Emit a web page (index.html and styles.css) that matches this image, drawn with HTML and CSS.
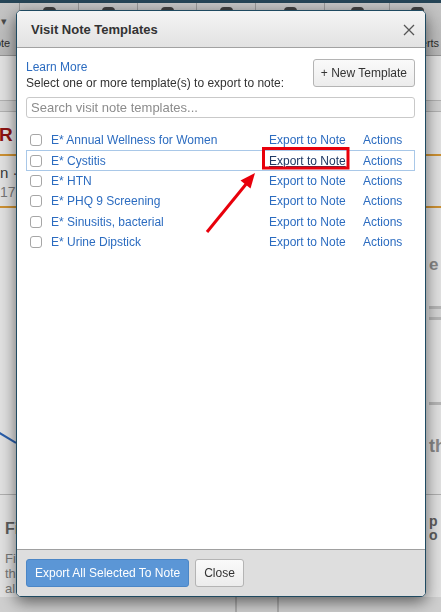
FILE: index.html
```html
<!DOCTYPE html>
<html lang="en">
<head>
  <meta charset="UTF-8" />
  <title>Visit Note Templates</title>
  <link rel="stylesheet" href="styles.css">
</head>
<body>
  <div class="app">
    <div class="topline"></div>
    <div class="toolbar">
      <div class="tool tool-first"><span class="caret">▾</span><span class="tool-label">Note</span></div>
      <div class="tool"><span class="tool-icon"></span><span class="tool-label">Orders</span></div>
      <div class="tool"><span class="tool-icon"></span><span class="tool-label">Rx</span></div>
      <div class="tool"><span class="tool-icon"></span><span class="tool-label">Labs</span></div>
      <div class="tool"><span class="tool-icon"></span><span class="tool-label">Imaging</span></div>
      <div class="tool tool-wide"><span class="tool-icon"></span><span class="tool-label">Vitals</span></div>
      <div class="tool tool-mid"><span class="tool-icon"></span><span class="tool-label">Flow</span></div>
      <div class="tool tool-last"><span class="tool-icon"></span><span class="tool-label">Alerts</span><span class="caret caret-right">▾</span></div>
    </div>
    <div class="subbar"></div>
    <div class="band"></div>

    <div class="section sec-title">
      <div class="side-left"><span class="page-heading">R</span></div>
      <div class="side-right"></div>
    </div>
    <div class="section sec-summary">
      <div class="side-left">
        <div class="summary-main">n ·</div>
        <div class="summary-sub">17</div>
      </div>
      <div class="side-right"></div>
    </div>
    <div class="section sec-chart">
      <div class="side-left">
        <svg class="chart" width="16" height="286" viewBox="0 0 16 286">
          <line x1="-2" y1="224" x2="16" y2="235" stroke="#2f6cc2" stroke-width="2" />
        </svg>
      </div>
      <div class="side-right">
        <div class="faded-word">e</div>
        <div class="right-band"></div>
        <div class="right-rule"></div>
        <div class="faded-word big">th</div>
      </div>
    </div>
    <div class="section sec-info">
      <div class="side-left">
        <div class="info-title">Fi</div>
        <div class="info-text">Fi<br>th<br>al</div>
      </div>
      <div class="side-right">
        <div class="info-title tight">p</div>
        <div class="info-title tight">o f</div>
      </div>
    </div>
    <div class="bottom-strip">
      <span class="bottom-rule"></span>
      <span class="bottom-rule"></span>
    </div>
  </div>

  <div class="overlay"></div>

  <div class="modal">
    <div class="modal-header">
      <span class="modal-title">Visit Note Templates</span>
      <svg class="close-x" width="12" height="12" viewBox="0 0 12 12">
        <path d="M1 1 L11 11 M11 1 L1 11" stroke="#555" stroke-width="1.3" fill="none" />
      </svg>
    </div>

    <div class="modal-body">
      <div class="intro">
        <div class="intro-text">
          <a class="link" href="#">Learn More</a>
          <div>Select one or more template(s) to export to note:</div>
        </div>
        <button class="btn">+ New Template</button>
      </div>
      <input class="search" type="text" placeholder="Search visit note templates...">

      <div class="template-list" id="templateList"></div>
    </div>

    <div class="modal-footer">
      <button class="btn btn-primary">Export All Selected To Note</button>
      <button class="btn">Close</button>
    </div>
  </div>

  <svg class="annotation" width="441" height="612" viewBox="0 0 441 612">
    <rect x="263.5" y="148.5" width="84.5" height="19.5" fill="none" stroke="#e8000b" stroke-width="3" />
    <line x1="207" y1="232" x2="247" y2="183" stroke="#e8000b" stroke-width="3" />
    <polygon points="255,173 240.5,180.5 250.5,188.5" fill="#e8000b" />
  </svg>

  <script>
    const templates = [
      "E* Annual Wellness for Women",
      "E* Cystitis",
      "E* HTN",
      "E* PHQ 9 Screening",
      "E* Sinusitis, bacterial",
      "E* Urine Dipstick"
    ];

    const list = document.getElementById("templateList");

    templates.forEach((name, i) => {
      const row = document.createElement("div");
      row.className = "template-row" + (i === 1 ? " hovered" : "");
      row.innerHTML = `
        <span class="check"></span>
        <a class="link" href="#">${name}</a>
        <a class="link export" href="#">Export to Note</a>
        <a class="link" href="#">Actions</a>
      `;
      list.appendChild(row);
    });
  </script>
</body>
</html>
```

FILE: styles.css
```css
* {
  box-sizing: border-box;
}

html, body {
  margin: 0;
  padding: 0;
  width: 441px;
  height: 612px;
  overflow: hidden;
  font-family: "Liberation Sans", Arial, sans-serif;
  color: #333;
}

/* app behind the dialog */
.app {
  width: 441px;
  height: 612px;
  background: #fff;
  display: flex;
  flex-direction: column;
  overflow: hidden;
}

.topline {
  height: 3px;
  flex-shrink: 0;
  background: #2c4f63;
}

.toolbar {
  height: 53px;
  flex-shrink: 0;
  display: flex;
  background: linear-gradient(#e2e2e2, #d0d0d0);
  border-bottom: 1px solid #a9a9a9;
}

.tool {
  width: 59px;
  flex-shrink: 0;
  display: flex;
  flex-direction: column;
  align-items: center;
  padding-top: 4px;
  border-right: 1px solid #b0b0b0;
  position: relative;
}

.tool-first {
  width: 20px;
  align-items: flex-start;
}

.tool-first .tool-label {
  margin-left: -13px;
}

.tool-wide { width: 69px; }
.tool-mid { width: 65px; }

.tool-last {
  width: 60px;
  border-right: none;
  align-items: flex-start;
}

.tool-last .tool-icon {
  margin-left: 21px;
}

.tool-last .tool-label {
  margin-left: 21px;
}

.tool-icon {
  width: 13px;
  height: 13px;
  border-radius: 4px;
  background: #4a4a4a;
}

.caret {
  font-size: 11px;
  color: #555;
  margin-top: 8px;
  margin-left: 1px;
}

.caret-right {
  position: absolute;
  right: 1px;
  top: 4px;
}

.tool-label {
  margin-top: auto;
  margin-bottom: 6px;
  font-size: 11px;
  color: #333;
  white-space: nowrap;
}

.subbar {
  height: 44px;
  flex-shrink: 0;
}

.band {
  height: 12px;
  flex-shrink: 0;
  background: #ededed;
  border-top: 1px solid #c9c9c9;
  border-bottom: 1px solid #c9c9c9;
}

.section {
  display: flex;
  justify-content: space-between;
  flex-shrink: 0;
}

.side-left {
  width: 60px;
  white-space: nowrap;
}

.side-right {
  width: 15px;
  white-space: nowrap;
  padding-left: 3px;
}

.sec-title { height: 42px; }

.page-heading {
  display: block;
  margin: 12px 0 0 -1px;
  font-size: 19px;
  font-weight: bold;
  color: #a01717;
}

.sec-summary {
  height: 54px;
  border-top: 2px solid #e9a43a;
  border-bottom: 2px solid #e9a43a;
  padding-top: 8px;
}

.summary-main {
  font-size: 15px;
  color: #444;
  line-height: 18px;
}

.summary-sub {
  font-size: 14px;
  color: #888;
  line-height: 20px;
}

.sec-chart {
  height: 287px;
  border-bottom: 1px solid #c6c6c6;
}

.faded-word {
  margin-top: 47px;
  font-size: 17px;
  font-weight: bold;
  color: #9a9a9a;
}

.faded-word.big {
  margin-top: 31px;
  font-size: 18px;
}

.right-band {
  margin-top: 31px;
  height: 14px;
  background: #f2f2f2;
  border-top: 3px solid #cfcfcf;
  border-bottom: 3px solid #cfcfcf;
}

.right-rule {
  margin-top: 82px;
  height: 3px;
  background: #cfcfcf;
}

.sec-info {
  height: 102px;
}

.side-left .info-title {
  margin: 25px 0 0 5px;
}

.info-title {
  font-size: 16px;
  font-weight: bold;
  color: #6a6a6a;
}

.info-title.tight {
  font-size: 14px;
  line-height: 14px;
  margin-top: 0;
}

.info-title.tight:first-child {
  margin-top: 19px;
}

.info-text {
  margin: 13px 0 0 5px;
  font-size: 13px;
  line-height: 15px;
  color: #8a8a8a;
}

.bottom-strip {
  flex: 1;
  background: #ececec;
  display: flex;
  gap: 40px;
  padding-left: 235px;
}

.bottom-rule {
  width: 2px;
  background: #c4c4c4;
}

.overlay {
  position: fixed;
  top: 0; left: 0;
  width: 100%; height: 100%;
  background: rgba(0, 0, 0, 0.12);
}

/* dialog */
.modal {
  position: absolute;
  left: 16px;
  top: 10px;
  width: 410px;
  height: 587px;
  background: #fff;
  border: 1px solid #1f4a61;
  border-radius: 5px;
  box-shadow: 0 5px 16px rgba(0, 0, 0, 0.55);
  display: flex;
  flex-direction: column;
  overflow: hidden;
}

.modal-header {
  height: 37px;
  flex-shrink: 0;
  display: flex;
  align-items: center;
  justify-content: space-between;
  padding: 0 10px 0 14px;
  background: linear-gradient(#f4f4f4, #e2e2e2);
  border-bottom: 1px solid #a2a2a2;
}

.modal-title {
  font-size: 13px;
  font-weight: bold;
  color: #333;
}

.close-x {
  display: block;
  margin-top: 1px;
}

.modal-body {
  flex: 1;
  padding: 11px 10px 0 9px;
  font-size: 12px;
}

.intro {
  display: flex;
  justify-content: space-between;
  align-items: flex-start;
}

.intro-text {
  line-height: 16px;
  color: #333;
}

.link {
  color: #2c6cc0;
  text-decoration: none;
}

.btn {
  font-family: "Liberation Sans", Arial, sans-serif;
  font-size: 12px;
  line-height: 14px;
  padding: 6px 7px;
  color: #333;
  background: linear-gradient(#fafafa, #ececec);
  border: 1px solid #b4b4b4;
  border-radius: 3px;
}

.search {
  display: block;
  width: 100%;
  height: 21px;
  margin-top: 6px;
  padding: 0 4px;
  font-family: "Liberation Sans", Arial, sans-serif;
  font-size: 13px;
  color: #333;
  border: 1px solid #c9c9c9;
  border-radius: 3px;
  outline: none;
}

.search::placeholder {
  color: #8c8c8c;
}

.template-list {
  margin-top: 12px;
}

.template-row {
  height: 20.4px;
  display: grid;
  grid-template-columns: 21px 1fr 94px 51px;
  align-items: center;
  padding-left: 3px;
  border: 1px solid transparent;
}

.template-row.hovered {
  border-color: #a9c8e8;
}

.template-row.hovered .export {
  color: #1f3a66;
  text-decoration: underline;
}

.check {
  width: 12px;
  height: 12px;
  border: 1px solid #a6a6a6;
  border-radius: 3px;
  background: #fff;
}

.modal-footer {
  height: 47px;
  flex-shrink: 0;
  display: flex;
  align-items: center;
  gap: 6px;
  padding: 0 0 0 9px;
  background: #dedede;
  border-top: 1px solid #a0a0a0;
}

.modal-footer .btn {
  padding: 6px 8px;
}

.btn-primary {
  color: #fff;
  background: #5b96d6;
  border-color: #4b86c6;
}

.annotation {
  position: absolute;
  top: 0;
  left: 0;
}
```
